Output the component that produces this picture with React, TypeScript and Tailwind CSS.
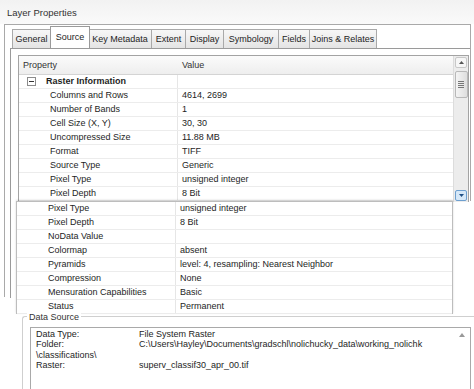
import React from "react";

const tabs = [
  { label: "General", w: 39 },
  { label: "Source", w: 40, active: true },
  { label: "Key Metadata", w: 63 },
  { label: "Extent", w: 34 },
  { label: "Display", w: 38 },
  { label: "Symbology", w: 55 },
  { label: "Fields", w: 31 },
  { label: "Joins & Relates", w: 67 },
];

const upperRows = [
  ["Columns and Rows", "4614, 2699"],
  ["Number of Bands", "1"],
  ["Cell Size (X, Y)", "30, 30"],
  ["Uncompressed Size", "11.88 MB"],
  ["Format", "TIFF"],
  ["Source Type", "Generic"],
  ["Pixel Type", "unsigned integer"],
  ["Pixel Depth", "8 Bit"],
];

const lowerRows = [
  ["Pixel Type", "unsigned integer"],
  ["Pixel Depth", "8 Bit"],
  ["NoData Value", ""],
  ["Colormap", "absent"],
  ["Pyramids", "level: 4, resampling: Nearest Neighbor"],
  ["Compression", "None"],
  ["Mensuration Capabilities", "Basic"],
  ["Status", "Permanent"],
];

const Row = ({ name, value }: { name: string; value: string }) => (
  <div className="flex h-[14px] items-center border-b border-[#ececec]">
    <div className="w-[158px] shrink-0 pl-[31px] truncate">{name}</div>
    <div className="h-full w-px bg-[#e6e6e6]" />
    <div className="pl-[4px] whitespace-nowrap">{value}</div>
  </div>
);

const Scrollbar = () => (
  <div className="flex w-[15px] shrink-0 flex-col items-center border-l border-[#dcdcdc] bg-[#ececec] pt-[1px]">
    <div className="flex h-[11px] w-[12px] items-center justify-center rounded-[2px] border border-[#c8c8c8] bg-[#f6f6f6]">
      <svg width="5" height="3" viewBox="0 0 5 3"><path d="M0 3 L2.5 0 L5 3Z" fill="#555" /></svg>
    </div>
    <div className="mt-[3px] flex h-[27px] w-[13px] items-center justify-center rounded-[2px] border border-[#b8b8b8] bg-gradient-to-r from-[#f4f4f4] to-[#dedede]">
      <div className="flex flex-col gap-[1px]">
        <div className="h-px w-[6px] bg-[#777]" />
        <div className="h-px w-[6px] bg-[#777]" />
        <div className="h-px w-[6px] bg-[#777]" />
        <div className="h-px w-[6px] bg-[#777]" />
      </div>
    </div>
    <div className="flex-1" />
    <div className="mb-[1px] flex h-[11px] w-[12px] items-center justify-center rounded-[2px] border border-[#6d9fcf] bg-[#d6e8f8]">
      <svg width="5" height="3" viewBox="0 0 5 3"><path d="M0 0 L2.5 3 L5 0Z" fill="#1e4f86" /></svg>
    </div>
  </div>
);

export default function App() {
  return (
    <div
      className="h-[389px] w-[474px] overflow-hidden bg-white text-[9px] leading-none text-[#1e1e1e]"
      style={{ fontFamily: '"Liberation Sans", Arial, sans-serif' }}
    >
      <div className="h-[24px] bg-gradient-to-b from-[#f2f2f2] to-[#fafafa] pl-[7px] pt-[8px] text-[9.5px] text-[#333]">
        Layer Properties
      </div>

      {/* property sheet frame */}
      <div className="ml-[4px] h-[273px] w-[467px] border-l border-t border-[#a9a9a9]">
        {/* upper half, from the first capture */}
        <div className="h-[176px] border-r border-[#a9a9a9]">
          <div className="flex h-[23px] items-end pl-[7px]">
            {tabs.map((t) =>
              t.active ? (
                <div
                  key={t.label}
                  style={{ width: t.w }}
                  className="relative z-10 -mx-px flex h-[22px] items-start justify-center border border-b-0 border-[#9a9a9a] bg-white pt-[6px]"
                >
                  {t.label}
                </div>
              ) : (
                <div
                  key={t.label}
                  style={{ width: t.w }}
                  className="flex h-[19px] items-center justify-center border border-b-0 border-l-0 border-[#a9a9a9] bg-gradient-to-b from-[#f7f7f7] to-[#e4e4e4] first:border-l"
                >
                  {t.label}
                </div>
              )
            )}
          </div>
          <div className="ml-[5px] h-[153px] border-l border-t border-[#9a9a9a] bg-white pl-[7px] pt-[6px]">
            <div className="flex h-[147px] w-[451px] border border-b-0 border-[#a3a3a3]">
              <div className="flex-1">
                <div className="flex h-[19px] items-center border-b border-[#d4d4d4] bg-gradient-to-b from-[#fbfbfb] to-[#eeeeee] text-[#333]">
                  <div className="w-[158px] pl-[4px]">Property</div>
                  <div className="pl-[5px]">Value</div>
                </div>
                <div className="flex h-[14px] items-center border-b border-[#ececec]">
                  <div className="flex w-[158px] items-center pl-[8px]">
                    <div className="flex h-[9px] w-[9px] items-center justify-center border border-[#8c8c8c] bg-white">
                      <div className="h-px w-[5px] bg-[#333]" />
                    </div>
                    <span className="pl-[10px] font-bold">Raster Information</span>
                  </div>
                  <div className="h-full w-px bg-[#e6e6e6]" />
                </div>
                {upperRows.map(([n, v]) => (
                  <Row key={"u" + n} name={n} value={v} />
                ))}
              </div>
              <Scrollbar />
            </div>
          </div>
        </div>

        {/* lower half, a second capture pasted under the first */}
        <div className="ml-[5px] h-[97px] border-l border-[#9a9a9a] pl-[5px]">
          <div className="relative z-10 h-[113px] w-[437px] border-l border-r border-t border-[#bdbdbd] bg-white shadow-[0_-1px_2px_rgba(0,0,0,0.15)]">
            {lowerRows.map(([n, v]) => (
              <Row key={"l" + n} name={n} value={v} />
            ))}
          </div>
        </div>
      </div>

      {/* Data Source group */}
      <div className="relative ml-[22px] mt-[19px] h-[80px] rounded-tl-[3px] border-l border-t border-[#cfcfcf] pl-[7px] pt-[10px]">
        <div className="absolute -top-[4px] left-[4px] z-20 bg-white px-[2px] text-[#333]">Data Source</div>
        <div className="flex h-[70px] w-[441px] border border-[#a9a9a9] bg-white">
          <div className="flex-1 pl-[5px] pt-[1px] leading-[10.3px]">
            <div className="flex">
              <div className="w-[103px]">Data Type:</div>
              <div>File System Raster</div>
            </div>
            <div className="flex">
              <div className="w-[103px]">Folder:</div>
              <div className="whitespace-nowrap">C:\Users\Hayley\Documents\gradschl\nolichucky_data\working_nolichk</div>
            </div>
            <div>\classifications\</div>
            <div className="flex">
              <div className="w-[103px]">Raster:</div>
              <div>superv_classif30_apr_00.tif</div>
            </div>
          </div>
          <div className="flex w-[17px] flex-col items-center justify-between pb-[2px] pt-[5px]">
            <svg width="6" height="4" viewBox="0 0 6 4"><path d="M0 4 L3 0 L6 4Z" fill="#999" /></svg>
            <svg width="6" height="4" viewBox="0 0 6 4"><path d="M0 0 L3 4 L6 0Z" fill="#999" /></svg>
          </div>
        </div>
      </div>
    </div>
  );
}
